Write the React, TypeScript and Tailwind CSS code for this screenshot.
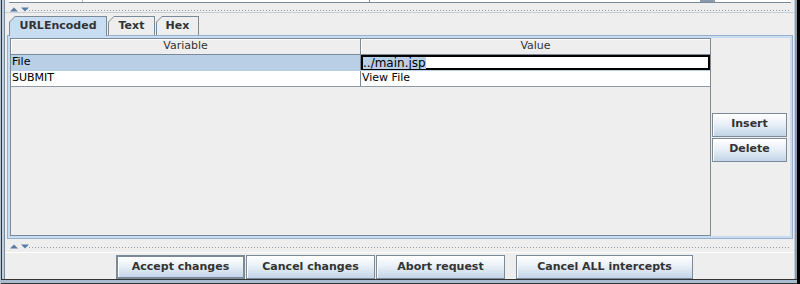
import React from 'react';

const dots = "h-px bg-[repeating-linear-gradient(90deg,#8c99a6_0_1px,transparent_1px_3px)]";
const btn =
  "flex items-center justify-center h-[24px] border border-[#7a8a99] bg-[linear-gradient(180deg,#ffffff_0%,#e9f0f7_45%,#c3d5e8_100%)] text-[11px] font-bold text-[#333333] shadow-[inset_1px_1px_0_#ffffff]";

function Arrows() {
  return (
    <svg width="24" height="5" viewBox="0 0 24 5" className="shrink-0">
      <polygon points="5,4.5 9,0.5 13,4.5" fill="#5a7ba1" />
      <polygon points="16,0.5 24,0.5 20,4.5" fill="#5a7ba1" />
    </svg>
  );
}

function Divider({ top }: { top?: boolean }) {
  return (
    <div className={`flex items-end h-[8px] pr-[4px] ${top ? 'border-b border-[#c9cfd6]' : ''}`}>
      <Arrows />
      <div className={`flex-1 mb-[1px] ${dots}`} />
    </div>
  );
}

function Tab({ label, selected, w }: { label: string; selected?: boolean; w: string }) {
  return (
    <div
      className={`${w} h-[19px] bg-[#7a8a99] pt-px px-px [clip-path:polygon(6px_0,100%_0,100%_100%,0_100%,0_6px)] ${
        selected ? 'h-[20px] -mb-px' : ''
      }`}
    >
      <div
        className={`h-full flex items-center justify-center text-[11px] font-bold text-[#333333] [clip-path:polygon(5px_0,100%_0,100%_100%,0_100%,0_5px)] ${
          selected ? 'bg-[#c8ddf2]' : 'bg-[#eeeeee]'
        }`}
      >
        {label}
      </div>
    </div>
  );
}

export default function App() {
  return (
    <div className="w-[800px] h-[284px] overflow-hidden bg-[#333333] font-['DejaVu_Sans',sans-serif] border-l border-l-[#b4c3d3] border-r-[3px] border-r-black">
      <div className="h-[279px] flex flex-col bg-[#eeeeee] border-l border-l-[#333333] border-r-[2px] border-r-[#8e99a4]">
        <div className="flex flex-1 border-l-[2px] border-l-[#b8cfe5] border-r border-r-[#b8cfe5]">
          <div className="flex-1 flex flex-col border-l border-l-[#7a8a99]">
            {/* top strip (bottom of upper pane) */}
            <div className="h-[3px] flex ml-[4px] mr-[3px] border-b border-[#7a8a99]">
              <div className="w-[74px] bg-white border-r border-[#b0b8c0]" />
              <div className="w-[287px] bg-white border-r border-[#7a8a99]" />
              <div className="w-[330px] bg-white" />
              <div className="w-[15px] bg-[#8a9aaa]" />
              <div className="flex-1 bg-white" />
            </div>
            <div className="pt-[2px]">
              <Divider top />
            </div>

            {/* tabbed pane */}
            <div className="flex flex-col ml-[2px] mr-[1px] mt-[3px]">
              <div className="flex items-end gap-px pl-[2px] h-[19px]">
                <Tab label="URLEncoded" selected w="w-[98px]" />
                <Tab label="Text" w="w-[47px]" />
                <Tab label="Hex" w="w-[43px]" />
              </div>
              <div className="h-[204px] border border-[#98b0cc]">
                <div className="h-full flex border-2 border-[#c8ddf2] bg-[#eeeeee]">
                  {/* table */}
                  <div className="w-[701px] flex flex-col border border-[#7a8a99] text-[11px] text-black">
                    <div className="flex h-[16px] bg-[#eeeeee] text-[#333333] border-b border-[#7a8a99]">
                      <div className="w-[350px] flex items-center justify-center border-r border-[#7a8a99] shadow-[inset_1px_1px_0_#ffffff]">
                        Variable
                      </div>
                      <div className="flex-1 flex items-center justify-center shadow-[inset_1px_1px_0_#ffffff]">
                        Value
                      </div>
                    </div>
                    <div className="flex h-[16px] border-b border-[#b8cfe5]">
                      <div className="w-[350px] flex items-center pl-[1px] bg-[#b8cfe5] border-r border-[#7a8a99]">File</div>
                      <div className="flex-1 flex items-center bg-white border-2 border-black text-[12px]">
                        <span className="bg-[#b8cfe5] leading-[12px]">../main.jsp</span>
                      </div>
                    </div>
                    <div className="flex h-[16px] bg-white border-b border-[#8e9ba8]">
                      <div className="w-[350px] flex items-center pl-[1px] border-r border-[#7a8a99]">SUBMIT</div>
                      <div className="flex-1 flex items-center pl-[1px]">View File</div>
                    </div>
                    <div className="flex-1 bg-[#eeeeee]" />
                  </div>
                  {/* side buttons */}
                  <div className="flex-1 flex flex-col items-start justify-center pl-px gap-px">
                    <div className={`${btn} w-[75px]`}>Insert</div>
                    <div className={`${btn} w-[75px]`}>Delete</div>
                  </div>
                </div>
              </div>
            </div>

            {/* lower divider */}
            <div className="pt-[2px] mr-[1px]">
              <Divider />
            </div>
            <div className="h-[4px] border-b border-white" />

            {/* bottom buttons */}
            <div className="flex items-start flex-1 pt-[2px] pl-[111px]">
              <div className={`${btn} w-[129px] border-2 border-[#6e7e8e]`}>Accept changes</div>
              <div className={`${btn} w-[129px] ml-[1px]`}>Cancel changes</div>
              <div className={`${btn} w-[129px] ml-[1px]`}>Abort request</div>
              <div className={`${btn} w-[177px] ml-[11px]`}>Cancel ALL intercepts</div>
            </div>
          </div>
        </div>
      </div>
      <div className="h-[5px] bg-[#a8bbcf] border-t border-b border-[#333333]" />
    </div>
  );
}
